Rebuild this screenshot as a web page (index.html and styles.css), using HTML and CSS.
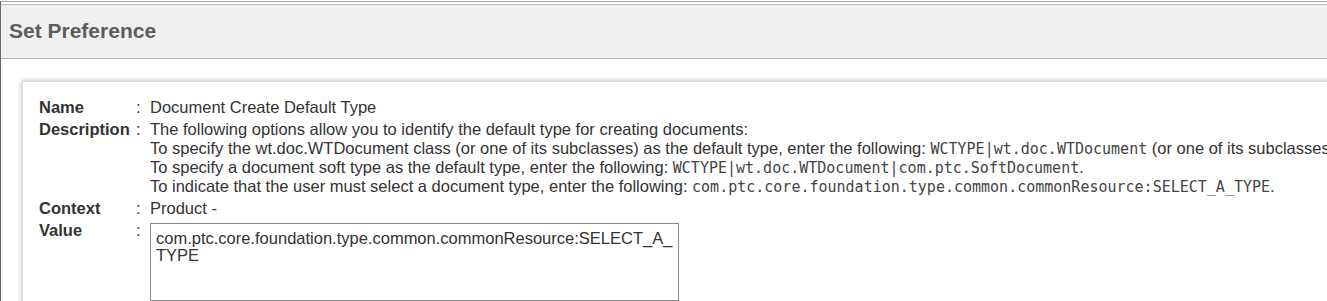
FILE: index.html
```html
<!DOCTYPE html>
<html lang="en">
<head>
  <meta charset="UTF-8">
  <meta name="viewport" content="width=device-width, initial-scale=1.0">
  <title>Set Preference</title>
  <link rel="stylesheet" href="styles.css">
</head>
<body>
  <div class="page">
    <div class="header">
      <h1>Set Preference</h1>
    </div>

    <div class="card">
      <div class="props">
        <div class="label">Name</div>
        <div class="colon">:</div>
        <div class="value">Document Create Default Type</div>

        <div class="label">Description</div>
        <div class="colon">:</div>
        <div class="value">
          <div class="line">The following options allow you to identify the default type for creating documents:</div>
          <div class="line">To specify the wt.doc.WTDocument class (or one of its subclasses) as the default type, enter the following: <code>WCTYPE|wt.doc.WTDocument</code> (or one of its subclasses</div>
          <div class="line">To specify a document soft type as the default type, enter the following: <code>WCTYPE|wt.doc.WTDocument|com.ptc.SoftDocument</code>.</div>
          <div class="line">To indicate that the user must select a document type, enter the following: <code>com.ptc.core.foundation.type.common.commonResource:SELECT_A_TYPE</code>.</div>
        </div>

        <div class="label">Context</div>
        <div class="colon">:</div>
        <div class="value">Product -</div>

        <div class="label">Value</div>
        <div class="colon">:</div>
        <div class="value">
          <textarea class="value-input">com.ptc.core.foundation.type.common.commonResource:SELECT_A_TYPE</textarea>
        </div>
      </div>
    </div>
  </div>
</body>
</html>
```

FILE: styles.css
```css
body {
  margin: 0;
  background: #fff;
  color: #333;
  font-family: 'Liberation Sans', Arial, sans-serif;
  font-size: 16.5px;
  overflow: hidden;
}
.page {
  border-left: 1px solid #666;
  border-top: 1px solid #aaa;
  margin-top: 1px;
  padding-top: 2px;
  height: 100vh;
  box-sizing: border-box;
}
.header {
  background: #f0f0f0;
  border-top: 1px solid #bbb;
  border-bottom: 1px solid #b4b4b4;
  height: 53px;
  display: flex;
  align-items: center;
  padding-left: 8px;
}
h1 {
  margin: 0;
  margin-top: -2px;
  font-size: 21px;
  font-weight: bold;
  color: #5c5c5c;
}
.card {
  margin: 22px -40px 0 21px;
  background: #fff;
  border: 1px solid #ddd;
  box-shadow: 0 0 5px rgba(0,0,0,0.3);
  padding: 16px 0 0 16px;
  height: 300px;
}
.props {
  display: grid;
  grid-template-columns: 97px 14px 1fr;
  row-gap: 3px;
  line-height: 19px;
}
.label {
  font-weight: bold;
  color: #333;
}
.colon {
  color: #333;
}
.value {
  white-space: nowrap;
  overflow: hidden;
}
.line {
  height: 19px;
}
code {
  font-family: 'DejaVu Sans Mono', monospace;
  font-size: 15px;
  line-height: 1;
  color: #444;
}
.value-input {
  display: block;
  margin-top: 2px;
  width: 529px;
  height: 78px;
  box-sizing: border-box;
  border: 1px solid #888;
  padding: 6px 4px 0 5px;
  font-family: 'Liberation Sans', Arial, sans-serif;
  font-size: 16.5px;
  line-height: 17px;
  color: #333;
  resize: none;
  white-space: pre-wrap;
  overflow-wrap: break-word;
  overflow: hidden;
}
```
